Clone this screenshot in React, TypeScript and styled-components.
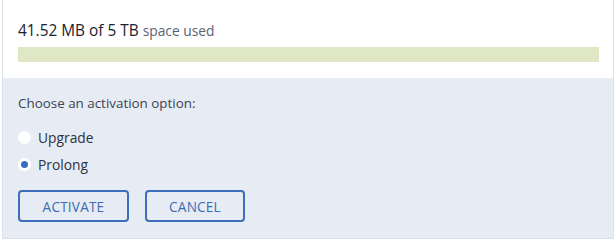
import React, { useState } from 'react'
import styled, { createGlobalStyle } from 'styled-components'

const GlobalStyle = createGlobalStyle`
  html, body {
    margin: 0;
    padding: 0;
    background: #ffffff;
    font-family: 'Open Sans', 'Liberation Sans', sans-serif;
  }
`

const Card = styled.div`
  margin-left: 2px;
  width: 612px;
  border: 1px solid #dbe1eb;
  border-top: none;
  box-sizing: border-box;
`

const Usage = styled.div`
  background: #ffffff;
  padding: 21px 14px 16px 15px;
  display: flex;
  flex-direction: column;
  gap: 7px;
`

const UsageText = styled.div`
  font-size: 15.4px;
  font-weight: 500;
  line-height: 19px;
  color: #1c2230;
`

const Muted = styled.span`
  font-size: 13.8px;
  font-weight: 400;
  color: #5a6275;
`

const Bar = styled.div`
  height: 15px;
  background: #dfe7c4;
`

const Fill = styled.div`
  height: 100%;
  background: #8bb33a;
`

const Options = styled.div`
  background: #e6ebf4;
  padding: 16px 15px 16px;
  display: flex;
  flex-direction: column;
`

const Prompt = styled.div`
  font-size: 13.4px;
  line-height: 19px;
  color: #3c4352;
  margin-bottom: 15px;
`

const RadioRow = styled.label`
  display: flex;
  align-items: center;
  gap: 7px;
  height: 19px;
  margin-bottom: 8px;
  font-size: 13.8px;
  color: #2c3342;
  cursor: pointer;
`

const Dot = styled.span<{ checked: boolean }>`
  width: 13px;
  height: 13px;
  border-radius: 50%;
  background: #ffffff;
  display: flex;
  align-items: center;
  justify-content: center;

  &::after {
    content: '';
    width: 7px;
    height: 7px;
    border-radius: 50%;
    background: ${({ checked }) => (checked ? '#3b6dbf' : 'transparent')};
  }
`

const Actions = styled.div`
  display: flex;
  gap: 16px;
  margin-top: 8px;
`

const Button = styled.button<{ width: number }>`
  width: ${({ width }) => width}px;
  height: 32px;
  box-sizing: border-box;
  border: 2px solid #3d6dbb;
  border-radius: 4px;
  background: transparent;
  color: #3d6cb3;
  font-family: 'Open Sans', 'Liberation Sans', sans-serif;
  font-size: 13.6px;
  letter-spacing: 0.2px;
  cursor: pointer;
`

const App: React.FunctionComponent = () => {
  const [option, setOption] = useState('prolong')
  const used = 0.000008

  return (
    <>
      <GlobalStyle />
      <Card>
        <Usage>
          <UsageText>
            41.52 MB of 5 TB <Muted>space used</Muted>
          </UsageText>
          <Bar>
            <Fill style={{ width: `${used * 100}%` }} />
          </Bar>
        </Usage>
        <Options>
          <Prompt>Choose an activation option:</Prompt>
          {[
            { id: 'upgrade', label: 'Upgrade' },
            { id: 'prolong', label: 'Prolong' },
          ].map((item) => (
            <RadioRow key={item.id} onClick={() => setOption(item.id)}>
              <Dot checked={option === item.id} />
              {item.label}
            </RadioRow>
          ))}
          <Actions>
            <Button width={111}>ACTIVATE</Button>
            <Button width={100}>CANCEL</Button>
          </Actions>
        </Options>
      </Card>
    </>
  )
}

export default App
